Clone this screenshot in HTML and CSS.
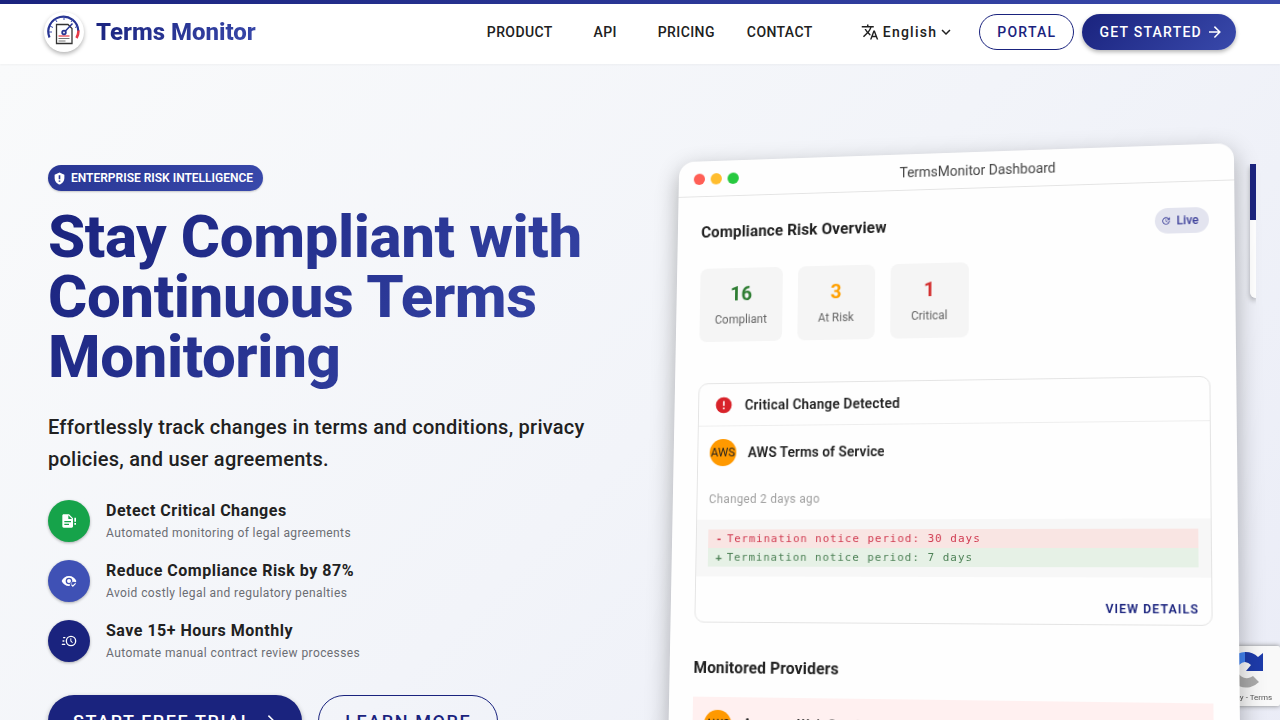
FILE: index.html
```html
<!DOCTYPE html>
<html lang="en">

<head>
	<meta charset="UTF-8" />
	<meta name="viewport" content="width=device-width, initial-scale=1" />
	<title>Terms Monitor</title>
	<link rel="stylesheet" href="styles.css">
</head>

<body>
	<header class="site-header">
		<a class="brand" href="#">
			<span class="brand-logo">
				<svg viewBox="0 0 40 40" width="40" height="40" aria-hidden="true">
					<path d="M5.500 25.500A15 15 0 1 1 34.300 19" fill="none" stroke="#283593" stroke-width="2.200" />
					<path d="M34.500 18.500A15 15 0 0 1 32.500 26" fill="none" stroke="#e53946" stroke-width="2.600" />
					<path d="M20 4v4M11 7l2 3M29 7l-2 3M6 14l3 1.500M34 14l-3 1.500M5 20h3" stroke="#3949ab" stroke-width="1" />
					<path d="M12.500 12.500H24l4 4V31.500H12.500Z" fill="#fff" stroke="#333" stroke-width="1.300" />
					<path d="M14.500 24h11" stroke="#e53946" stroke-width="1.200" />
					<path d="M14.500 26.500h11M14.500 29h7" stroke="#777" stroke-width="1" />
					<path d="M20 20.500l8.500-9" stroke="#283593" stroke-width="1.500" />
					<circle cx="20" cy="20.500" r="1.800" fill="#fff" stroke="#283593" stroke-width="1.800" />
				</svg>
			</span>
			<span class="brand-name">Terms Monitor</span>
		</a>
		<nav class="main-nav">
			<a href="#">Product</a>
			<a href="#">API</a>
			<a href="#">Pricing</a>
			<a href="#">Contact</a>
		</nav>
		<button class="language" type="button">
			<svg viewBox="0 0 24 24" width="18" height="18" aria-hidden="true"><path d="M12.870 15.070L10.330 12.560L10.360 12.530C12.100 10.590 13.340 8.360 14.070 6H17V4H10V2H8V4H1V6H12.170C11.500 7.920 10.440 9.750 9 11.350C8.070 10.320 7.300 9.190 6.690 8H4.690C5.420 9.630 6.420 11.170 7.670 12.560L2.580 17.580L4 19L9 14L12.110 17.110L12.870 15.070M18.500 10H16.500L12 22H14L15.120 19H19.870L21 22H23L18.500 10M15.880 17L17.500 12.670L19.120 17H15.880Z" /></svg>
			English
			<svg class="chevron" viewBox="0 0 24 24" width="18" height="18" aria-hidden="true"><path d="M7.410 8.580L12 13.170L16.590 8.580L18 10L12 16L6 10Z" /></svg>
		</button>
		<div class="header-actions">
			<a class="btn btn-outline" href="#">Portal</a>
			<a class="btn btn-primary" href="#">Get Started
				<svg viewBox="0 0 24 24" width="18" height="18" aria-hidden="true"><path d="M4 11V13H16L10.500 18.500L11.920 19.920L19.840 12L11.920 4.080L10.500 5.500L16 11H4Z" /></svg>
			</a>
		</div>
	</header>

	<main class="hero">
		<section class="hero-text">
			<span class="hero-badge">
				<svg viewBox="0 0 24 24" width="13" height="13" aria-hidden="true"><path d="M12 1L3 5V11C3 16.550 6.840 21.740 12 23C17.160 21.740 21 16.550 21 11V5M13.500 18H10.500V15.500H13.500M13.500 13.500H10.500V6H13.500" fill-rule="evenodd" /></svg>
				Enterprise Risk Intelligence
			</span>
			<h1>Stay Compliant with Continuous Terms Monitoring</h1>
			<p class="hero-lead">Effortlessly track changes in terms and conditions, privacy policies, and user agreements.</p>
			<ul class="features">
				<li>
					<span class="feature-icon green">
						<svg viewBox="0 0 24 24" width="16" height="16" aria-hidden="true"><path d="M4 2C2.900 2 2 2.900 2 4V20C2 21.100 2.900 22 4 22H16C17.100 22 18 21.100 18 20V8L12 2ZM11 9V3.500L16.500 9ZM5 12H15V14H5ZM5 16H12V18H5ZM20 7H22.500V13H20ZM20 15H22.500V17.500H20Z" fill-rule="evenodd" /></svg>
					</span>
					<div>
						<h3>Detect Critical Changes</h3>
						<p>Automated monitoring of legal agreements</p>
					</div>
				</li>
				<li>
					<span class="feature-icon blue">
						<svg viewBox="0 0 24 24" width="16" height="16" aria-hidden="true"><path d="M12 4.500C7 4.500 2.700 7.600 1 12C2.700 16.400 7 19.500 12 19.500L13 19.450C13 17 15 13.500 19 13C20.500 13 21.500 13.500 22.400 14L23 12C21.300 7.600 17 4.500 12 4.500M12 7A5 5 0 1 1 12 17A5 5 0 0 1 12 7M12 9A3 3 0 1 0 12 15A3 3 0 0 0 12 9M22.500 16.250L17.750 21L15 18L16.160 16.840L17.750 18.430L21.340 14.840Z" fill-rule="evenodd" /></svg>
					</span>
					<div>
						<h3>Reduce Compliance Risk by 87%</h3>
						<p>Avoid costly legal and regulatory penalties</p>
					</div>
				</li>
				<li>
					<span class="feature-icon navy">
						<svg viewBox="0 0 24 24" width="16" height="16" aria-hidden="true"><path d="M15 4A8 8 0 0 1 23 12A8 8 0 0 1 15 20A8 8 0 0 1 7 12A8 8 0 0 1 15 4M15 6A6 6 0 0 0 9 12A6 6 0 0 0 15 18A6 6 0 0 0 21 12A6 6 0 0 0 15 6M14 8H15.500V11.780L17.830 14.110L16.770 15.170L14 12.400V8M2 18A1 1 0 0 1 1 17A1 1 0 0 1 2 16H5.830C6.140 16.710 6.540 17.380 7 18H2M3 13A1 1 0 0 1 2 12A1 1 0 0 1 3 11H5.050L5 12L5.050 13H3M4 8A1 1 0 0 1 3 7A1 1 0 0 1 4 6H7C6.540 6.620 6.140 7.290 5.830 8H4Z" /></svg>
					</span>
					<div>
						<h3>Save 15+ Hours Monthly</h3>
						<p>Automate manual contract review processes</p>
					</div>
				</li>
			</ul>
			<div class="hero-actions">
				<a class="btn btn-large btn-solid" href="#">Start Free Trial
					<svg viewBox="0 0 24 24" width="18" height="18" aria-hidden="true"><path d="M4 11V13H16L10.500 18.500L11.920 19.920L19.840 12L11.920 4.080L10.500 5.500L16 11H4Z" /></svg>
				</a>
				<a class="btn btn-large btn-outline" href="#">Learn More</a>
			</div>
		</section>

		<section class="dashboard">
			<div class="window-bar">
				<div class="dots"><i class="dot red"></i><i class="dot yellow"></i><i class="dot lime"></i></div>
				<span class="window-title">TermsMonitor Dashboard</span>
			</div>
			<div class="window-body">
				<div class="overview-head">
					<h2>Compliance Risk Overview</h2>
					<span class="chip">
						<svg viewBox="0 0 24 24" width="10" height="10" aria-hidden="true"><path d="M21 10.120H14.220L16.960 7.300C14.230 4.600 9.810 4.500 7.080 7.200C4.350 9.910 4.350 14.280 7.080 17C9.810 19.700 14.230 19.700 16.960 17C18.320 15.650 19 14.080 19 12.100H21C21 14.080 20.120 16.650 18.360 18.390C14.850 21.870 9.150 21.870 5.640 18.390C2.140 14.920 2.110 9.280 5.620 5.810C9.130 2.340 14.760 2.340 18.270 5.810L21 3V10.120M12.500 8V12.250L16 14.330L15.280 15.540L11 13V8H12.500Z" /></svg>
						Live
					</span>
				</div>
				<div class="stats">
					<div class="stat"><b class="ok">16</b><span>Compliant</span></div>
					<div class="stat"><b class="risk">3</b><span>At Risk</span></div>
					<div class="stat"><b class="critical">1</b><span>Critical</span></div>
				</div>
				<article class="change-card">
					<h3 class="change-head">
						<svg viewBox="0 0 24 24" width="20" height="20" aria-hidden="true"><path d="M13 13H11V7H13M13 17H11V15H13M12 2A10 10 0 0 0 2 12A10 10 0 0 0 12 22A10 10 0 0 0 22 12A10 10 0 0 0 12 2Z" /></svg>
						Critical Change Detected
					</h3>
					<div class="change-doc"><span class="avatar">AWS</span>AWS Terms of Service</div>
					<p class="change-date">Changed 2 days ago</p>
					<div class="diff">
						<div class="removed"><b>-</b>Termination notice period: 30 days</div>
						<div class="added"><b>+</b>Termination notice period: 7 days</div>
					</div>
					<div class="change-actions"><button type="button">View Details</button></div>
				</article>
				<h2 class="providers-title">Monitored Providers</h2>
				<div class="provider"><span class="avatar">AWS</span>Amazon Web Services</div>
			</div>
		</section>

		<div class="next-slide"></div>
	</main>

	<aside class="recaptcha">
		<svg viewBox="0 0 40 40" width="40" height="40" aria-hidden="true">
			<path d="M20 2A18 18 0 0 1 33 7L38 3V21H21L26 15A9 9 0 0 0 20 12Z" fill="#1c3aa9" />
			<path d="M20 2A18 18 0 0 0 3 20H12A9 9 0 0 1 20 12Z" fill="#4285f4" />
			<path d="M3 20A18 18 0 0 0 34 32L28 26A10 10 0 0 1 12 20Z" fill="#ababab" />
		</svg>
		<div><a href="#">Privacy</a> - <a href="#">Terms</a></div>
	</aside>
</body>

</html>
```

FILE: styles.css
```css
* {
	box-sizing: border-box;
}

html {
	scrollbar-width: none;
}

body {
	margin: 0;
	font-family: Roboto, "Liberation Sans", sans-serif;
	color: #212121;
	background: #fff;
	overflow-x: hidden;
}

h1,
h2,
h3,
p,
ul {
	margin: 0;
	padding: 0;
}

a {
	color: inherit;
	text-decoration: none;
}

button {
	font-family: inherit;
	color: inherit;
	background: none;
	border: 0;
	padding: 0;
	cursor: pointer;
}

svg {
	fill: currentColor;
	flex: none;
}

/* header */
.site-header {
	position: relative;
	z-index: 5;
	display: flex;
	align-items: center;
	height: 64px;
	padding: 0 44px;
	background: #fff;
	box-shadow: 0 1px 2px rgba(0, 0, 0, 0.04);
}

.site-header::before {
	content: "";
	position: absolute;
	top: 0;
	left: 0;
	right: 0;
	height: 4px;
	background: linear-gradient(90deg, #1a237e, #3949ab);
}

.brand {
	display: flex;
	align-items: center;
	gap: 12px;
	margin-right: auto;
}

.brand-logo {
	width: 40px;
	height: 40px;
	border-radius: 50%;
	background: #fff;
	box-shadow: 0 2px 4px rgba(0, 0, 0, 0.3);
}

.brand-name {
	font-size: 24px;
	font-weight: 800;
	background: linear-gradient(135deg, #1a237e, #3949ab);
	background-clip: text;
	-webkit-background-clip: text;
	color: transparent;
}

.main-nav {
	display: flex;
	margin-right: 32px;
}

.main-nav a {
	min-width: 73px;
	padding: 8px 16px;
	text-align: center;
	font-size: 14px;
	font-weight: 500;
	letter-spacing: 0.400px;
	text-transform: uppercase;
}

.language {
	display: flex;
	align-items: center;
	gap: 4px;
	margin-right: 24px;
	font-size: 14px;
	font-weight: 500;
	letter-spacing: 1.250px;
}

.chevron {
	margin-left: -4px;
}

.header-actions {
	display: flex;
	gap: 8px;
}

.btn {
	display: inline-flex;
	align-items: center;
	gap: 4px;
	height: 36px;
	padding: 0 17px;
	border: 1px solid transparent;
	border-radius: 30px;
	font-size: 14px;
	font-weight: 500;
	letter-spacing: 1.250px;
	text-transform: uppercase;
	white-space: nowrap;
}

.btn-outline {
	color: #1a237e;
	border-color: #1a237e;
}

.btn-primary {
	padding-right: 12px;
	color: #fff;
	border: 0;
	background: linear-gradient(135deg, #1a237e, #3949ab);
	box-shadow: 0 2px 4px rgba(0, 0, 0, 0.3);
}

.btn-large {
	gap: 8px;
	height: 52px;
	padding: 0 26px;
	font-size: 18px;
	letter-spacing: 1.600px;
}

.btn-solid {
	padding: 0 23px 0 24px;
	color: #fff;
	background: #1a237e;
	box-shadow: 0 2px 5px rgba(0, 0, 0, 0.3);
}

/* hero */
.hero {
	position: relative;
	display: grid;
	grid-template-columns: 1fr 1fr;
	gap: 48px;
	padding: 80px 48px;
	background: linear-gradient(135deg, #f9fafb, #f2f4f9 45%, #e8eaf6);
	overflow: hidden;
}

.hero-text {
	padding-top: 21px;
}

.hero-badge {
	display: inline-flex;
	align-items: center;
	gap: 5px;
	height: 26px;
	padding: 0 10px 0 5px;
	border-radius: 13px;
	color: #fff;
	background: linear-gradient(135deg, #283593, #3949ab);
	box-shadow: 0 1px 2px rgba(0, 0, 0, 0.2);
	font-size: 12px;
	font-weight: 600;
	text-transform: uppercase;
}

.hero h1 {
	margin-top: 16px;
	padding-bottom: 8px;
	font-size: 60px;
	font-weight: 800;
	line-height: 60px;
	letter-spacing: -0.400px;
	background: linear-gradient(135deg, #1a237e, #3949ab);
	background-clip: text;
	-webkit-background-clip: text;
	color: transparent;
}

.hero-lead {
	margin-top: 16px;
	font-size: 20px;
	font-weight: 500;
	line-height: 32px;
	letter-spacing: 0.250px;
}

.features {
	display: grid;
	gap: 16px;
	margin-top: 25px;
	list-style: none;
}

.features li {
	display: flex;
	gap: 16px;
}

.features h3 {
	font-size: 16px;
	font-weight: 700;
	line-height: 22px;
	letter-spacing: 0.500px;
}

.features p {
	font-size: 12px;
	line-height: 22px;
	letter-spacing: 0.400px;
	color: #6b6d73;
}

.feature-icon {
	display: flex;
	align-items: center;
	justify-content: center;
	width: 42px;
	height: 42px;
	border-radius: 50%;
	color: #fff;
	box-shadow: 0 1px 3px rgba(0, 0, 0, 0.3);
}

.feature-icon.green {
	background: #16a34a;
}

.feature-icon.blue {
	background: #3f51b5;
}

.feature-icon.navy {
	background: #1a237e;
}

.hero-actions {
	display: flex;
	gap: 16px;
	margin-top: 31px;
}

/* dashboard mockup */
.dashboard {
	position: relative;
	z-index: 3;
	min-height: 808px;
	border-radius: 16px;
	background: #fefefe;
	box-shadow: 0 8px 24px rgba(0, 0, 0, 0.3);
	transform: perspective(1000px) rotateY(-5deg) rotateX(3deg);
}

.window-bar {
	display: grid;
	grid-template-columns: 56px 1fr;
	align-items: center;
	height: 38px;
	padding: 0 16px;
	border-bottom: 1px solid #e4e4e4;
}

.dots {
	display: flex;
	gap: 6px;
}

.dot {
	width: 12px;
	height: 12px;
	border-radius: 50%;
}

.dot.red {
	background: #ff5f56;
}

.dot.yellow {
	background: #ffbd2e;
}

.dot.lime {
	background: #27c93f;
}

.window-title {
	text-align: center;
	font-size: 14px;
	color: #444;
}

.window-body {
	padding: 26px 25px;
}

.overview-head {
	display: flex;
	justify-content: space-between;
	height: 26px;
}

.dashboard h2 {
	font-size: 16px;
	font-weight: 700;
	line-height: 24px;
	letter-spacing: 0.150px;
}

.chip {
	display: flex;
	align-items: center;
	gap: 5px;
	height: 26px;
	padding: 0 10px 0 6px;
	border-radius: 13px;
	font-size: 12px;
	font-weight: 500;
	color: #3f429b;
	background: #e3e4ef;
}

.stats {
	display: flex;
	gap: 16px;
	margin-top: 24px;
}

.stat {
	display: flex;
	flex-direction: column;
	align-items: center;
	min-width: 80px;
	padding: 12px 16px 10px;
	border-radius: 8px;
	background: #f5f5f5;
}

.stat b {
	font-size: 20px;
	line-height: 30px;
}

.stat span {
	font-size: 12px;
	line-height: 25px;
	color: #666;
}

.ok {
	color: #2e7d32;
}

.risk {
	color: #ffa000;
}

.critical {
	color: #d32f2f;
}

.change-card {
	margin-top: 43px;
	border: 1px solid #e4e4e4;
	border-radius: 10px;
}

.change-head {
	display: flex;
	align-items: center;
	gap: 12px;
	height: 44px;
	padding: 0 16px;
	border-bottom: 1px solid #eee;
	font-size: 14px;
	font-weight: 600;
	letter-spacing: 0.200px;
}

.change-head svg {
	color: #d8232a;
}

.change-doc,
.provider {
	display: flex;
	align-items: center;
	gap: 12px;
	height: 53px;
	padding: 0 12px;
	font-size: 14px;
	font-weight: 600;
	letter-spacing: 0.100px;
}

.avatar {
	display: flex;
	align-items: center;
	justify-content: center;
	width: 28px;
	height: 28px;
	border-radius: 50%;
	background: #ff9900;
	font-size: 12px;
	font-weight: 400;
}

.change-date {
	padding: 13px 12px 12px;
	font-size: 12px;
	line-height: 18px;
	letter-spacing: 0.400px;
	color: #9e9e9e;
}

.diff {
	padding: 10px 12px;
	background: #f7f7f7;
	font-family: "DejaVu Sans Mono", monospace;
	font-size: 11px;
	line-height: 19px;
}

.diff div {
	display: flex;
	gap: 5px;
	padding-left: 8px;
	letter-spacing: 1px;
}

.diff b {
	letter-spacing: 0;
}

.removed {
	color: #d03a50;
	background: #f9e5e3;
}

.added {
	color: #4c8055;
	background: #e6f1e6;
}

.change-actions {
	display: flex;
	justify-content: flex-end;
	align-items: center;
	height: 46px;
	padding-right: 12px;
}

.change-actions button {
	padding-top: 16px;
	font-size: 12px;
	font-weight: 600;
	letter-spacing: 1px;
	text-transform: uppercase;
	color: #1a237e;
}

.dashboard .providers-title {
	margin-top: 34px;
}

.provider {
	margin-top: 17px;
	background: #fff0f0;
}

.next-slide {
	position: absolute;
	z-index: 1;
	top: 100px;
	right: 24px;
	width: 6px;
	height: 134px;
	border-bottom-left-radius: 8px;
	background: linear-gradient(#1a237e 56px, #fff 56px);
	box-shadow: 0 3px 5px rgba(0, 0, 0, 0.3);
	clip-path: inset(0 0 -12px -8px);
}

.recaptcha {
	position: fixed;
	z-index: 2;
	right: 0;
	bottom: 14px;
	width: 70px;
	height: 60px;
	padding-top: 4px;
	border-radius: 2px;
	text-align: center;
	color: #555;
	background: #f9f9f9;
	box-shadow: 0 0 5px gray;
	font-size: 8px;
	line-height: 10px;
	white-space: nowrap;
}
```
